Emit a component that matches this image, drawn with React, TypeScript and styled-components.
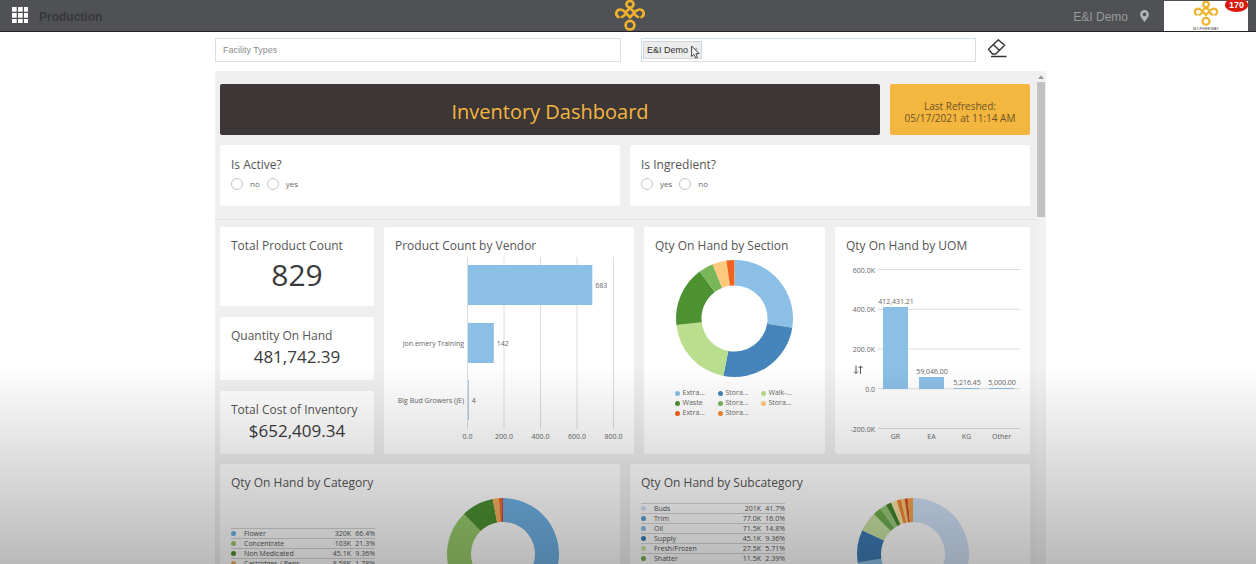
import React from 'react';
import styled, { createGlobalStyle } from 'styled-components';

const GlobalStyle = createGlobalStyle`
  *, *::before, *::after { box-sizing: border-box; }
  body {
    margin: 0;
    background: #fff;
    color: #4a4a4a;
    font-family: "Open Sans", "Noto Sans", sans-serif;
  }
`;

const ui = '"Liberation Sans", Arial, sans-serif';

const Page = styled.div`
  position: relative;
  display: flex;
  flex-direction: column;
  height: 100vh;
  overflow: hidden;
`;

/* ---------- top bar ---------- */

const TopBar = styled.header`
  display: grid;
  grid-template-columns: 1fr auto 1fr;
  flex: none;
  height: 32px;
  background: #505155;
  border-bottom: 1px solid #232326;
  font-family: ${ui};
`;

const BarLeft = styled.div`
  display: flex;
  align-items: center;
  gap: 11px;
  padding-left: 12px;
`;

const BarRight = styled.div`
  display: flex;
  align-items: center;
  justify-content: flex-end;
  padding-right: 8px;
`;

const BareButton = styled.button`
  display: flex;
  padding: 0;
  border: 0;
  background: none;
  cursor: pointer;
`;

const AppsButton = styled(BareButton)`
  padding-bottom: 2px;
`;

const Section = styled.h1`
  margin: 0;
  padding-top: 2px;
  color: #36373b;
  font-size: 12px;
  line-height: 16px;
`;

const BrandLink = styled.a`
  display: flex;
  margin-left: 4px;
`;

const Site = styled.span`
  color: #98999c;
  font-size: 12px;
  line-height: 16px;
  padding-top: 2px;
`;

const PinButton = styled(BareButton)`
  margin: 0 15px 0 12px;
`;

const Account = styled.a`
  position: relative;
  display: flex;
  flex-direction: column;
  align-items: center;
  width: 84px;
  height: 30px;
  background: #fff;
  color: #444;
  font-size: 4px;
  line-height: 5px;
  text-decoration: none;
`;

const Badge = styled.span`
  position: absolute;
  top: -3px;
  right: 0;
  width: 23px;
  height: 14px;
  border-radius: 50%;
  background: #d91a0c;
  color: #fff;
  font-size: 9px;
  font-weight: 700;
  line-height: 15px;
  text-align: center;
`;

/* ---------- filters ---------- */

const Content = styled.main`
  display: flex;
  flex: 1;
  flex-direction: column;
  gap: 9px;
  min-height: 0;
  padding: 6px 210px 0 215px;
`;

const Filters = styled.div`
  display: grid;
  grid-template-columns: 406fr 335fr 50px;
  gap: 20px;
  height: 24px;
`;

const fieldBox = `
  min-width: 0;
  height: 24px;
  border: 1px solid #dcdfe1;
  background: #fff;
  font-family: ${ui};
  font-size: 9px;
`;

const FacilityInput = styled.input`
  ${fieldBox}
  padding: 0 7px;
  color: #555;
  &::placeholder { color: #8c8c8c; opacity: 1; }
`;

const TagField = styled.div`
  ${fieldBox}
  position: relative;
  display: flex;
  align-items: center;
  padding-left: 1px;
  border-color: #c4e0f2 #dcdfe1 #dcdfe1 #c4e0f2;
`;

const Tag = styled.span`
  display: flex;
  justify-content: space-between;
  align-items: center;
  width: 59px;
  height: 18px;
  padding: 0 3px;
  border: 1px solid #ccd6dc;
  background: #ececec;
  color: #333;
  line-height: 14px;
`;

const TagRemove = styled(BareButton)`
  color: #777;
  font-size: 9px;
`;

const TagInput = styled.input`
  flex: 1;
  min-width: 0;
  border: 0;
  outline: 0;
  background: none;
`;

const Pointer = styled.svg`
  position: absolute;
  top: 6px;
  left: 49px;
`;

const ClearButton = styled(BareButton)`
  margin-left: -9px;
`;

/* ---------- dashboard ---------- */

const Panel = styled.section`
  display: flex;
  flex: 1;
  min-height: 0;
  background: #efefef;
`;

const Board = styled.div`
  flex: 1;
  min-width: 0;
  padding: 13px 6px 0 5px;
  overflow: hidden;
`;

const ScrollTrack = styled.div`
  flex: none;
  width: 10px;
  background: #f1f1f1;
`;

const ScrollArrow = styled.svg`
  display: block;
  fill: #999;
`;

const ScrollThumb = styled.div`
  height: 135px;
  margin: 0 1px;
  background: #c1c1c1;
`;

const Row = styled.div<{ $columns: string }>`
  display: grid;
  grid-template-columns: ${p => p.$columns};
  gap: 10px;
  margin-bottom: 10px;
`;

const Banner = styled.div`
  height: 51px;
  border-radius: 2px;
  background: #3c3736;
  color: #f3b63f;
  font-size: 20px;
  line-height: 56px;
  text-align: center;
`;

const Refreshed = styled.div`
  padding-top: 16px;
  border-radius: 2px;
  background: #f3b63f;
  color: #6d5428;
  font-size: 10px;
  line-height: 12px;
  text-align: center;
`;

const Divider = styled.hr`
  margin: 13px -6px 7px -5px;
  border: 0;
  border-top: 1px solid #e2e2e2;
`;

const Card = styled.section`
  min-width: 0;
  border-radius: 2px;
  background: #fff;
`;

const CardTitle = styled.h2`
  margin: 0;
  padding: 11px 11px 0;
  color: #555;
  font-size: 12px;
  font-weight: 400;
  line-height: 16px;
  white-space: nowrap;
`;

const OptionCard = styled.fieldset`
  height: 61px;
  min-width: 0;
  margin: 0;
  padding: 12px 11px;
  border: 0;
  border-radius: 2px;
  background: #fff;
`;

const OptionTitle = styled.legend`
  float: left;
  width: 100%;
  padding: 0;
  color: #555;
  font-size: 12px;
  line-height: 16px;
`;

const Options = styled.div`
  display: flex;
  gap: 7px;
  clear: both;
  padding-top: 5px;
`;

const Option = styled.label`
  display: flex;
  align-items: center;
  gap: 7px;
  color: #666;
  font-size: 8px;
  line-height: 12px;
`;

const Radio = styled.input`
  appearance: none;
  width: 12px;
  height: 12px;
  margin: 0;
  border: 1px solid #c4c4c4;
  border-radius: 50%;
  background: #fff;
  &:checked { border: 4px solid #4685bb; }
`;

const Stats = styled.div`
  display: flex;
  flex-direction: column;
  gap: 11px;
`;

const StatCard = styled(Card)<{ $large?: boolean }>`
  flex: ${p => (p.$large ? '0 0 79px' : '1')};
`;

const StatValue = styled.p<{ $large?: boolean }>`
  margin: 0;
  padding-top: 1px;
  color: #3a3a3a;
  font-size: ${p => (p.$large ? 30 : 17)}px;
  line-height: ${p => (p.$large ? 40 : 24)}px;
  text-align: center;
`;

const Chart = styled.svg`
  display: block;
  width: 100%;
  fill: #666;
  font-size: 7px;
`;

const Legend = styled.ul`
  display: grid;
  grid-template-columns: repeat(3, 43px);
  justify-content: center;
  margin: 0;
  padding: 10px 0 0 9px;
  list-style: none;
  color: #666;
  font-size: 7px;
  line-height: 10px;
`;

const LegendItem = styled.li`
  display: flex;
  align-items: center;
  gap: 3px;
`;

const Dot = styled.span<{ $color: string }>`
  display: block;
  flex: none;
  width: 5px;
  height: 5px;
  border-radius: 50%;
  background: ${p => p.$color};
`;

const SplitCard = styled(Card)`
  height: 200px;
`;

const Split = styled.div<{ $top: number }>`
  display: grid;
  grid-template-columns: 144px 1fr;
  align-items: start;
  padding-left: 11px;

  & > table { margin-top: ${p => p.$top}px; }
`;

const Breakdown = styled.table`
  width: 144px;
  border-collapse: collapse;
  table-layout: fixed;
  color: #555;
  font-size: 7px;
  line-height: 9px;

  td { height: 10px; padding: 0; border-top: 1px solid #d6d6d6; }
  td:nth-child(1) { width: 13px; }
  td:nth-child(3) { width: 30px; text-align: right; }
  td:nth-child(4) { width: 24px; text-align: right; }
`;

const Scrim = styled.div`
  position: absolute;
  right: 0;
  bottom: 0;
  left: 0;
  height: 200px;
  background: linear-gradient(rgba(0, 0, 0, 0), rgba(0, 0, 0, 0.13) 48%, rgba(0, 0, 0, 0.27));
  pointer-events: none;
`;

/* ---------- drawings ---------- */

function Brand({ width, height }: { width: number; height: number }) {
  return (
    <svg width={width} height={height} viewBox="0 0 32 32" preserveAspectRatio="none" fill="none" stroke="#f0b22b" strokeWidth="2.7" strokeLinecap="round" strokeLinejoin="round" aria-hidden="true">
      <circle cx="16" cy="4.4" r="3.5" />
      <circle cx="16" cy="26" r="4.4" />
      <path d="M12.500 11.500 16 8.500 19.500 11.500" />
      <path d="M4.500 17.600C.8 15.400 2 9.800 6.400 9.800c2.400 0 3.600 1.400 4.800 2.800L16 18l4.800-5.400c1.200-1.400 2.400-2.800 4.800-2.800 4.400 0 5.600 5.600 1.900 7.800" />
      <path d="M7.800 17.500c1.600-.4 2.600-1.600 3.600-2.800M24.200 17.500c-1.600-.4-2.600-1.600-3.600-2.800" />
    </svg>
  );
}

function AppsIcon() {
  const cells = [0, 6, 12];
  return (
    <svg width="16" height="16" fill="#fff" aria-hidden="true">
      {cells.map(y => cells.map(x => <rect key={`${x}-${y}`} x={x} y={y} width="4.700" height="4.700" />))}
    </svg>
  );
}

type Slice = { color: string; value: number };

function Donut({ cx, cy, outer, inner, slices }: { cx: number; cy: number; outer: number; inner: number; slices: Slice[] }) {
  const total = slices.reduce((sum, s) => sum + s.value, 0);
  const at = (r: number, turn: number) => {
    const a = turn * Math.PI * 2;
    return `${(cx + r * Math.sin(a)).toFixed(2)} ${(cy - r * Math.cos(a)).toFixed(2)}`;
  };
  let start = 0;
  return (
    <g>
      {slices.map((s, i) => {
        const end = start + s.value / total;
        const large = end - start > 0.5 ? 1 : 0;
        const d = `M${at(outer, start)}A${outer} ${outer} 0 ${large} 1 ${at(outer, end)}L${at(inner, end)}A${inner} ${inner} 0 ${large} 0 ${at(inner, start)}Z`;
        start = end;
        return <path key={i} d={d} fill={s.color} />;
      })}
    </g>
  );
}

/* ---------- data ---------- */

const sections = [
  { name: 'Extra...', color: '#8bbfe6', value: 99 },
  { name: 'Stora...', color: '#4685bb', value: 92 },
  { name: 'Walk-...', color: '#b9de8e', value: 72.5 },
  { name: 'Waste', color: '#4d9131', value: 60 },
  { name: 'Stora...', color: '#79b659', value: 14.5 },
  { name: 'Stora...', color: '#fdc97c', value: 14 },
  { name: 'Extra...', color: '#f0621f', value: 7.5 },
  { name: 'Stora...', color: '#f58a30', value: 0.5 },
];

type Item = { name: string; color: string; qty: string; value: number };

const categories: Item[] = [
  { name: 'Flower', color: '#6fb1e4', qty: '320K', value: 66.4 },
  { name: 'Concentrate', color: '#99cc6c', qty: '103K', value: 21.3 },
  { name: 'Non Medicated', color: '#4d9131', qty: '45.1K', value: 9.36 },
  { name: 'Cartridges / Pens', color: '#fbae5c', qty: '8.58K', value: 1.78 },
];
const categoryRest: Slice[] = [
  { color: '#f0621f', value: 0.7 },
  { color: '#d2452a', value: 0.46 },
];

const subcategories: Item[] = [
  { name: 'Buds', color: '#cfe2f8', qty: '201K', value: 41.7 },
  { name: 'Trim', color: '#5f9ed6', qty: '77.0K', value: 16.0 },
  { name: 'Oil', color: '#8bbfe6', qty: '71.5K', value: 14.8 },
  { name: 'Supply', color: '#3d7db5', qty: '45.1K', value: 9.36 },
  { name: 'Fresh/Frozen', color: '#cbe5a5', qty: '27.5K', value: 5.71 },
  { name: 'Shatter', color: '#6fae50', qty: '11.5K', value: 2.39 },
];
const subcategoryRest: Slice[] = [
  { color: '#99cc7c', value: 1.9 },
  { color: '#43852b', value: 1.6 },
  { color: '#fbe3a8', value: 1.7 },
  { color: '#f58a30', value: 1.3 },
  { color: '#fdc97c', value: 1.0 },
  { color: '#d9531e', value: 0.9 },
  { color: '#f9a64c', value: 1.5 },
];

const vendors = [
  { name: '', count: 683, y: 38 },
  { name: 'Jon.emery Training', count: 142, y: 96 },
  { name: 'Big Bud Growers (JE)', count: 4, y: 153 },
];

const units = [
  { name: 'GR', label: '412,431.21', x: 48, top: 80, labelY: 77 },
  { name: 'EA', label: '59,046.00', x: 84, top: 150, labelY: 147 },
  { name: 'KG', label: '5,216.45', x: 119, top: 161, labelY: 158 },
  { name: 'Other', label: '5,000.00', x: 154, top: 161, labelY: 158 },
];

function RadioFilter({ title, name, options }: { title: string; name: string; options: string[] }) {
  return (
    <OptionCard>
      <OptionTitle>{title}</OptionTitle>
      <Options>
        {options.map(o => (
          <Option key={o}>
            <Radio type="radio" name={name} value={o} />
            {o}
          </Option>
        ))}
      </Options>
    </OptionCard>
  );
}

function Stat({ title, value, large }: { title: string; value: string; large?: boolean }) {
  return (
    <StatCard $large={large}>
      <CardTitle>{title}</CardTitle>
      <StatValue $large={large}>{value}</StatValue>
    </StatCard>
  );
}

function VendorChart() {
  return (
    <Chart viewBox="0 27 250 200" role="img" aria-label="Product count by vendor">
      {[0, 200, 400, 600, 800].map((v, i) => (
        <g key={v}>
          <path d={`M${83.5 + i * 36.5} 30V202`} stroke="#dcdcdc" />
          <text x={83.5 + i * 36.5} y="212" textAnchor="middle">{v.toFixed(1)}</text>
        </g>
      ))}
      {vendors.map(v => (
        <g key={v.count}>
          <rect x="84" y={v.y} width={v.count * 0.182} height="40" fill="#8bbfe6" />
          <text x="80" y={v.y + 23} textAnchor="end">{v.name}</text>
          <text x={87 + v.count * 0.182} y={v.y + 23}>{v.count}</text>
        </g>
      ))}
    </Chart>
  );
}

function UnitChart() {
  return (
    <Chart viewBox="0 27 195 200" role="img" aria-label="Quantity on hand by unit of measure">
      {['600.0K', '400.0K', '200.0K', '0.0', '-200.0K'].map((v, i) => (
        <g key={v}>
          <path d={`M43 ${42.5 + i * 39.75}H185`} stroke="#dcdcdc" />
          <text x="40" y={45.5 + i * 39.75} textAnchor="end">{v}</text>
        </g>
      ))}
      {units.map(u => (
        <g key={u.name} textAnchor="middle">
          <rect x={u.x} y={u.top} width="25" height={162 - u.top} fill="#8bbfe6" />
          <text x={u.x + 13} y={u.labelY}>{u.label}</text>
          <text x={u.x + 12.5} y="212">{u.name}</text>
        </g>
      ))}
      <path d="M21 138.500v8M19 144.500l2 2 2-2M25.500 147v-8M23.500 141l2-2 2 2" fill="none" stroke="#555" />
    </Chart>
  );
}

function BreakdownCard({ title, items, rest, top }: { title: string; items: Item[]; rest: Slice[]; top: number }) {
  return (
    <SplitCard>
      <CardTitle>{title}</CardTitle>
      <Split $top={top}>
        <Breakdown>
          <tbody>
            {items.map(i => (
              <tr key={i.name}>
                <td><Dot $color={i.color} /></td>
                <td>{i.name}</td>
                <td>{i.qty}</td>
                <td>{i.value >= 10 ? i.value.toFixed(1) : i.value.toFixed(2)}%</td>
              </tr>
            ))}
          </tbody>
        </Breakdown>
        <Chart viewBox="0 27 245 130" role="img" aria-label={title}>
          <Donut cx={128} cy={90} outer={56} inner={32} slices={[...items, ...rest]} />
        </Chart>
      </Split>
    </SplitCard>
  );
}

export default function App() {
  return (
    <Page>
      <GlobalStyle />
      <TopBar>
        <BarLeft>
          <AppsButton aria-label="Apps"><AppsIcon /></AppsButton>
          <Section>Production</Section>
        </BarLeft>
        <BrandLink href="#" aria-label="Home"><Brand width={32} height={31} /></BrandLink>
        <BarRight>
          <Site>E&amp;I Demo</Site>
          <PinButton aria-label="Location">
            <svg width="9" height="12" viewBox="0 0 9 12" fill="#b4b5b8" aria-hidden="true">
              <path fillRule="evenodd" d="M4.500 0A4.400 4.400 0 0 0 .1 4.400C.1 7 3 9.500 4.500 12 6 9.500 8.900 7 8.900 4.400A4.400 4.400 0 0 0 4.500 0Zm0 2.400a1.900 1.900 0 1 1 0 3.800 1.900 1.900 0 0 1 0-3.800Z" />
            </svg>
          </PinButton>
          <Account href="#" aria-label="Account, 170 notifications">
            <Brand width={26} height={25} />
            MJ FREEWAY
            <Badge>170</Badge>
          </Account>
        </BarRight>
      </TopBar>

      <Content>
        <Filters>
          <FacilityInput placeholder="Facility Types" aria-label="Facility Types" />
          <TagField>
            <Tag>E&amp;I Demo<TagRemove aria-label="Remove E&amp;I Demo">×</TagRemove></Tag>
            <TagInput aria-label="Facilities" />
            <Pointer width="9" height="14" viewBox="0 0 9 14" aria-hidden="true">
              <path d="M.6 1v10.500l2.300-2.200 1.700 3.700 1.900-.8-1.700-3.600h3.300Z" fill="#fff" stroke="#444" />
            </Pointer>
          </TagField>
          <ClearButton aria-label="Clear filters">
            <svg width="20" height="20" fill="none" stroke="#333" strokeWidth="1.400" strokeLinejoin="round" aria-hidden="true">
              <path d="M1.500 11.200 11.300 1.700 17.600 7.200 8.700 16H5.500ZM6.300 6.500l6 5.800M4 18.500h15.500" />
            </svg>
          </ClearButton>
        </Filters>

        <Panel>
          <Board>
            <Row $columns="660fr 140fr">
              <Banner>Inventory Dashboard</Banner>
              <Refreshed>Last Refreshed:<br />05/17/2021 at 11:14 AM</Refreshed>
            </Row>
            <Row $columns="1fr 1fr">
              <RadioFilter title="Is Active?" name="active" options={['no', 'yes']} />
              <RadioFilter title="Is Ingredient?" name="ingredient" options={['yes', 'no']} />
            </Row>
            <Divider />
            <Row $columns="154fr 250fr 181fr 195fr">
              <Stats>
                <Stat title="Total Product Count" value="829" large />
                <Stat title="Quantity On Hand" value="481,742.39" />
                <Stat title="Total Cost of Inventory" value="$652,409.34" />
              </Stats>
              <Card>
                <CardTitle>Product Count by Vendor</CardTitle>
                <VendorChart />
              </Card>
              <Card>
                <CardTitle>Qty On Hand by Section</CardTitle>
                <Chart viewBox="0 27 181 124" role="img" aria-label="Quantity on hand by section">
                  <Donut cx={90.5} cy={91.5} outer={58.5} inner={33} slices={sections} />
                </Chart>
                <Legend>
                  {sections.map((s, i) => (
                    <LegendItem key={i}><Dot $color={s.color} />{s.name}</LegendItem>
                  ))}
                </Legend>
              </Card>
              <Card>
                <CardTitle>Qty On Hand by UOM</CardTitle>
                <UnitChart />
              </Card>
            </Row>
            <Row $columns="1fr 1fr">
              <BreakdownCard title="Qty On Hand by Category" items={categories} rest={categoryRest} top={37} />
              <BreakdownCard title="Qty On Hand by Subcategory" items={subcategories} rest={subcategoryRest} top={12} />
            </Row>
          </Board>
          <ScrollTrack>
            <ScrollArrow width="10" height="11" aria-hidden="true"><path d="M5 4.500 8 8H2Z" /></ScrollArrow>
            <ScrollThumb />
          </ScrollTrack>
        </Panel>
      </Content>
      <Scrim />
    </Page>
  );
}
